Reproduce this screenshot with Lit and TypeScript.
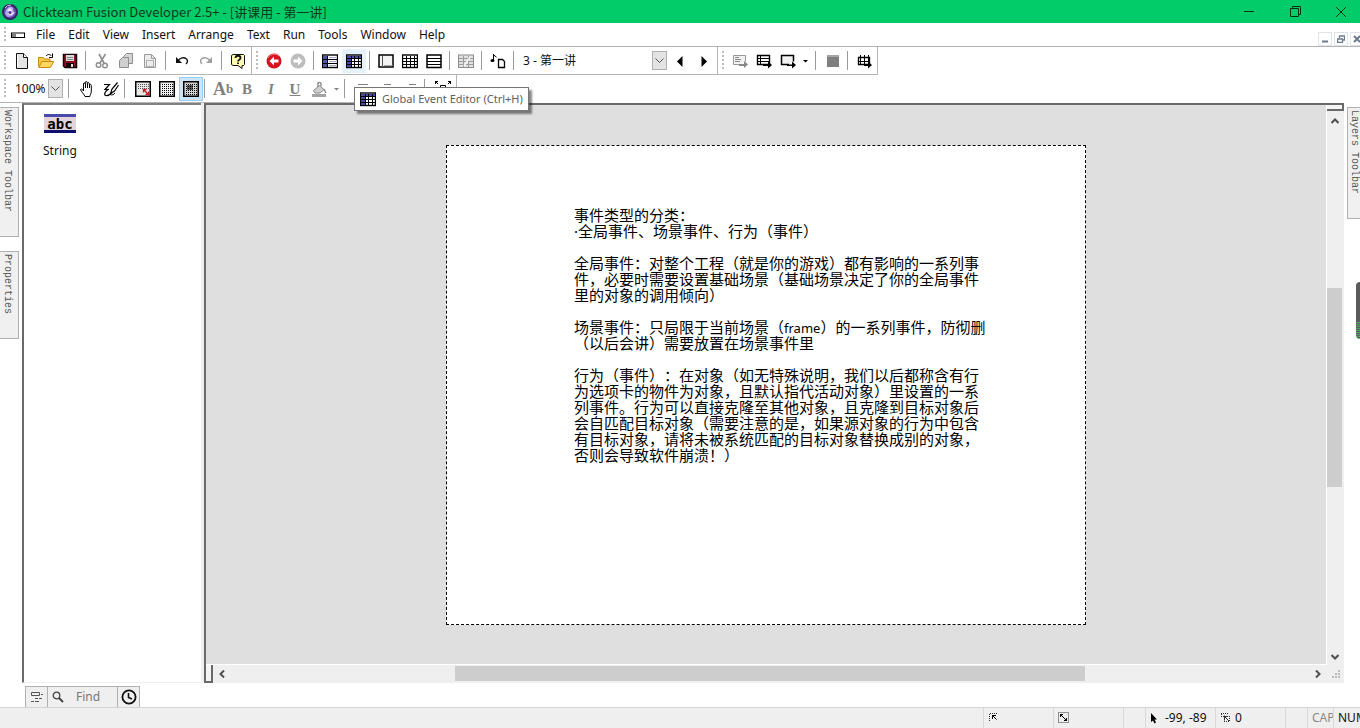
import { LitElement, html, svg, css, nothing, TemplateResult, SVGTemplateResult } from 'lit';
import { customElement, state } from 'lit/decorators.js';
import { classMap } from 'lit/directives/class-map.js';

const draw = (body: SVGTemplateResult, w = 16, h = 16) =>
  html`<svg class="icon" width=${w} height=${h} viewBox="0 0 ${w} ${h}" fill="none" aria-hidden="true">${body}</svg>`;

const gridDots = (cols: number[], rows: number[], color = '#000') =>
  rows.map((y) => cols.map((x) => svg`<rect x=${x} y=${y} width="1" height="1" fill=${color} />`));

const dots = [3, 5, 7, 9, 11, 13];

const icons: Record<string, TemplateResult> = {
  fresh: draw(svg`
    <path d="M2.500 .5h7l4 4v11h-11z" fill="#e4e4e4" stroke="#111"/><path d="M9.500 .5v4h4" fill="#fff" stroke="#111"/>
    <path d="M3.500 2v12" stroke="#fff"/>`),
  open: draw(svg`
    <path d="M.5 13.500V4.500h5l1 1.500h5.500v3" fill="#f7c948" stroke="#c68a10"/>
    <path d="M.8 14.500l3-6h12l-3.500 6z" fill="#ffd75e" stroke="#c68a10"/>
    <path d="M8 3c1.500-2 4-2 5.500 0M14.500 .5v4h-3.500" stroke="#000"/>`),
  save: draw(svg`
    <path d="M1.500 1.500h13v13H3l-1.500-1.500z" fill="#8c1020" stroke="#16060a" stroke-width="1.500"/>
    <rect x="4" y="2" width="8" height="6" fill="#d9d9d9"/><path d="M5 4.500h6M5 6.500h6" stroke="#8a8a8a"/>
    <rect x="4" y="10" width="8" height="4" fill="#16060a"/><rect x="9" y="11" width="2" height="3" fill="#e0e0e0"/>`),
  cut: draw(svg`
    <path d="M5 1l5 9M11.500 1L6 10" stroke="#8d8d8d" stroke-width="1.600"/>
    <circle cx="4.500" cy="12" r="2.300" stroke="#8d8d8d" stroke-width="1.400"/><circle cx="11" cy="12.500" r="2.300" stroke="#8d8d8d" stroke-width="1.400"/>`),
  copy: draw(svg`
    <path d="M5.500 3.500l3-3h6v10h-9z" fill="#d4d4d4" stroke="#8d8d8d"/>
    <path d="M1.500 7.500l3-3h6v10h-9z" fill="#cfcfcf" stroke="#8d8d8d"/>`),
  paste: draw(svg`
    <path d="M2.500 1.500h7l4 4v9h-11z" fill="#ececec" stroke="#9a9a9a"/><path d="M9.500 1.500v4h4" stroke="#9a9a9a"/>
    <rect x="4.500" y="7.500" width="7" height="6" stroke="#777" stroke-dasharray="1 1"/>`),
  undo: draw(svg`
    <path d="M2 4v6h6z" fill="#111"/><path d="M4 8c2-3.500 6-4 8-2.500s2 3.500 0 5.500" stroke="#111" stroke-width="1.400"/>`),
  redo: draw(svg`
    <path d="M14 4v6h-6z" fill="#a0a0a0"/><path d="M12 8C10 4.500 6 4 4 5.500s-2 3.500 0 5.500" stroke="#9a9a9a" stroke-width="1.400"/>`),
  help: draw(svg`
    <path d="M3 1.500h10.500l1 1v9l-1 1H12v3l-4-3H3l-1.500-1v-9z" fill="#ffffb4" stroke="#111"/>
    <path d="M5.500 5c.2-3 5-3 5 0 0 1.700-2.500 1.800-2.500 3.500M8 9.500v1.500" stroke="#111" stroke-width="1.800"/>`),
  back: draw(svg`
    <circle cx="8" cy="8" r="7.500" fill="#d8121c"/><path d="M2 5a7 7 0 0 1 11-2" stroke="#f4767b"/>
    <path d="M8 3.500L3.500 8 8 12.500V9.500h4.500v-3H8z" fill="#fff"/>`),
  forward: draw(svg`
    <circle cx="8" cy="8" r="7.500" fill="#bdbdbd"/><path d="M8 3.500L12.500 8 8 12.500V9.500H3.500v-3H8z" fill="#fff"/>`),
  storyboard: draw(svg`
    <rect x=".5" y="2" width="15" height="12.500" fill="#fff" stroke="#000" stroke-width="1.400"/><rect x="1" y="3" width="4" height="11" fill="#5555a8"/>
    <path d="M1 6.500h14M1 10.500h14M5.500 3v11" stroke="#000"/><path d="M7 4.500h7M7 8.500h7M7 12.500h7" stroke="#a9a9c9"/>`),
  global: draw(svg`
    <rect x=".5" y="2" width="15" height="12.500" fill="#fff" stroke="#000" stroke-width="1.400"/><path d="M1 3h14v3H5v8H1z" fill="#4a4aa5"/>
    <path d="M1 5.500h14M1 8.500h14M1 11.500h14M5.500 3v11M8.500 3v11M12.500 3v11" stroke="#000"/>`),
  frame: draw(svg`
    <rect x="1" y="2" width="14" height="12" fill="#f4f4f4" stroke="#000" stroke-width="1.500"/><path d="M4.500 3v11" stroke="#555"/><path d="M6 12.500h8.500" stroke="#aaa"/>`),
  events: draw(svg`
    <rect x=".5" y="2" width="15" height="12.500" fill="#fff" stroke="#000" stroke-width="1.400"/>
    <path d="M1 5.500h14M1 8.500h14M1 11.500h14M4.500 3v11M8.500 3v11M12.500 3v11" stroke="#000"/>`),
  list: draw(svg`
    <rect x="1" y="2" width="14" height="12.500" fill="#fff" stroke="#000" stroke-width="1.500"/><path d="M1 5.500h14M1 8.500h14M1 11.500h14" stroke="#000"/>`),
  data: draw(svg`
    <rect x=".5" y="2" width="15" height="12.500" fill="#e2e2e2" stroke="#8c8c8c"/>
    <path d="M1 5.500h14M1 8.500h14M1 11.500h14M5.500 3v11M10.500 3v11" stroke="#9c9c9c"/><path d="M12 4L6 13" stroke="#f7f7f7" stroke-width="1.500"/>`),
  music: draw(svg`
    <path d="M3.500 1v6M3.500 2l3 2" stroke="#000"/><ellipse cx="2.500" cy="7.500" rx="2" ry="1.500" fill="#000"/>
    <path d="M8.500 6.500h4l2 2v6h-6z" fill="#fff" stroke="#000" stroke-width="1.300"/>`),
  prev: draw(svg`<path d="M10.500 3v11L5 8.500z" fill="#000"/>`),
  next: draw(svg`<path d="M5.500 3v11L11 8.500z" fill="#000"/>`),
  runProject: draw(svg`
    <path d="M9 11.500H1.500v-9h12v6" fill="#f1f1f1" stroke="#999"/><path d="M3 4.500h4M3 6.500h6M3 8.500h5" stroke="#888"/>
    <path d="M7 11h5V8l4 3.500-4 3.500v-2H7z" fill="#888"/>`),
  runFrame: draw(svg`
    <path d="M1.500 2.500h12v9h-12z" fill="#fff" stroke="#000" stroke-width="1.400"/><path d="M1 5.500h13M1 8.500h13M4.500 2v10" stroke="#000"/>
    <path d="M7 11.500h5V8.500l4 3.500-4 3.500v-2.500H7z" fill="#000"/>`),
  run: draw(svg`
    <path d="M9 11.500H1.500v-9h12v6" fill="#f1f1f1" stroke="#000" stroke-width="1.500"/>
    <path d="M7 11.500h5V8.500l4 3.500-4 3.500v-2.500H7z" fill="#000"/>`),
  stop: draw(svg`<rect x="3" y="2" width="12" height="12" fill="#7f7f7f"/><path d="M3 3h12" stroke="#a5a5a5" stroke-width="2"/>`),
  build: draw(svg`
    <path d="M2.500 4.500h11v7h-11z" fill="#fff" stroke="#000" stroke-width="1.300"/><path d="M2 8.500h12M4.500 2v10M8.500 2v10M12.500 2v8" stroke="#000"/>
    <path d="M8 11.500h4V8.500l4 3.500-4 3.500v-2.500H8z" fill="#000"/>`),
  hand: draw(svg`
    <path d="M6 15.500C5 13 2 10.500 1.500 8.500c.5-1 2-.5 3 1.500V3c0-1.500 1.800-1.500 1.800 0V1.500c0-1.300 2-1.300 2 0V2.500c0-1.200 2-1.200 2 0v1.500c.3-1 2-1 2 .5V10c0 3-1.500 4-1.500 5.500zM6.500 3v4M8.500 2.500v4.500M10.500 4v3" fill="#fff" stroke="#000"/>`),
  pen: draw(svg`
    <path d="M1 3.500h5.500L2 8.500h4M5.500 8c-4 3-5 6-2.500 6.500s4-1 5.500-2.500" stroke="#000" stroke-width="1.200"/>
    <path d="M14.500 1.500L9 8l-1.500 4.500L11.500 10l4-6" fill="#fff" stroke="#000" stroke-width="1.200"/><path d="M7 13.500c2 1 4 0 5-1.500" stroke="#000"/>`),
  snap: draw(svg`
    <rect x=".75" y=".75" width="14.500" height="14.500" fill="#e8e8e8" stroke="#000" stroke-width="1.500"/>${gridDots([3, 5, 7, 9, 11, 13], [3, 5, 7], '#555')}
    <path d="M9 9l4 4M8.500 11.500V8.500h3M13.500 10.500v3H10.500" stroke="#c02020" stroke-width="1.300"/>`),
  grid: draw(svg`
    <rect x=".75" y=".75" width="14.500" height="14.500" fill="#f0f0f0" stroke="#000" stroke-width="1.500"/>${gridDots(dots, dots)}`),
  gridOn: draw(svg`
    <rect x=".75" y=".75" width="14.500" height="14.500" fill="#d2d2d2" stroke="#000" stroke-width="1.500"/>
    <rect x="4" y="4" width="6" height="5" fill="#555"/>${gridDots(dots, dots)}`),
  bucket: draw(svg`
    <path d="M1 14.500h14" stroke="#a4a4a4" stroke-width="3"/><path d="M2.500 9.500l6-5 4.500 4-4 3.500H4z" fill="#cfcfcf" stroke="#888"/><path d="M7 6V2.500c0-1.500 3-1.500 3 0V5M13 8l2 4" stroke="#888" stroke-width="1.400"/>`),
  alignL: draw(svg`<path d="M3 3.500h10M3 6.500h7M3 9.500h10M3 12.500h7" stroke="#808080"/>`),
  alignC: draw(svg`<path d="M5 3.500h7M3 6.500h10M5 9.500h7M3 12.500h10" stroke="#808080"/>`),
  alignR: draw(svg`<path d="M6 3.500h7M3 6.500h10M6 9.500h7M3 12.500h10" stroke="#808080"/>`),
  resize: draw(svg`<path d="M0 .5h3M.5 0v3M0 0l3 3M16 .5h-3M15.500 0v3M16 0l-3 3" stroke="#000"/><path d="M5.500 14V4.500H10.500V14M10 6.500h2V14" stroke="#000"/>`),
  caret: draw(svg`<path d="M1 7h5L3.500 9.500z" fill="currentColor"/>`, 8, 16),
  mdi: draw(svg`<rect x=".5" y="1" width="13" height="4.500" fill="#fff" stroke="#000"/><rect x="1" y="1.500" width="4" height="3.500" fill="#808080"/>`, 14, 6),
  tree: draw(svg`<path d="M1.500 2.500h8v3h-8zM11 4.500h2M5 8.500h3M9 8.500h3M1 11.500h3M5 11.500h4" stroke="#555"/>`, 14, 14),
  search: draw(svg`<circle cx="4.500" cy="4.500" r="3.300" stroke="#444" stroke-width="1.300"/><path d="M7 7l4 4" stroke="#444" stroke-width="2"/>`, 12, 12),
  clock: draw(svg`<circle cx="8" cy="8" r="6.600" stroke="#111" stroke-width="1.800"/><path d="M7.500 4v4.500l3.500 1.500" stroke="#111" stroke-width="1.600"/>`),
  cursor: draw(svg`<path d="M4 3v9l2-1.500 1.500 3 1.500-1-1.500-3H10z" fill="#000"/>`, 12, 16),
  corner: draw(svg`<path d="M2 1.500h8M1.500 2v8" stroke="#333" stroke-dasharray="1 1"/><path d="M4 3.500h4M4.500 3v4M4.500 3.500l4 4" stroke="#000"/>`, 11, 12),
  extent: draw(svg`<rect x=".5" y=".5" width="10" height="10" stroke="#333" stroke-dasharray="1 1"/><path d="M2 2.500h3M2.500 2v3M2.500 2.500l6 6M9 8.500H6M8.500 9V6" stroke="#000"/>`, 11, 12),
  count: draw(svg`<path d="M1 1.500h8M1.500 2v4M9.500 4v6M4 9.500h6" stroke="#333" stroke-dasharray="1 1"/><path d="M3 4.500h5M4.500 3.500v5M4 4l5 5" stroke="#333"/>`, 12, 12),
};

const chevron = (d: string) =>
  html`<svg width="8" height="8" viewBox="0 0 8 8" fill="none" aria-hidden="true"><path d=${d} stroke="#4f4f4f" stroke-width="2"/></svg>`;

type Item = { icon?: string; glyph?: string | TemplateResult; cls?: string; label?: string; sep?: boolean; caret?: boolean; off?: boolean; tip?: string };
const sep: Item = { sep: true };

const standardBar: Item[] = [
  { icon: 'fresh', label: 'New' }, { icon: 'open', label: 'Open' }, { icon: 'save', label: 'Save' }, sep,
  { icon: 'cut', label: 'Cut' }, { icon: 'copy', label: 'Copy' }, { icon: 'paste', label: 'Paste' }, sep,
  { icon: 'undo', label: 'Undo' }, { icon: 'redo', label: 'Redo' }, sep,
  { icon: 'help', label: 'Help' },
];
const editorBar: Item[] = [
  { icon: 'back', label: 'Back' }, { icon: 'forward', label: 'Forward' }, sep,
  { icon: 'storyboard', label: 'Storyboard Editor' },
  { icon: 'global', label: 'Global Event Editor', cls: 'hot', tip: 'Global Event Editor (Ctrl+H)' }, sep,
  { icon: 'frame', label: 'Frame Editor' }, { icon: 'events', label: 'Event Editor' }, { icon: 'list', label: 'Event List Editor' }, sep,
  { icon: 'data', label: 'Data Elements' }, sep,
  { icon: 'music', label: 'Frame Sounds' }, sep,
];
const runBar: Item[] = [
  { icon: 'runProject', label: 'Run Project' }, { icon: 'runFrame', label: 'Run Frame' }, { icon: 'run', label: 'Run' },
  { caret: true, label: 'Run options' }, sep,
  { icon: 'stop', label: 'Stop' }, sep, { icon: 'build', label: 'Build' },
];
const frameBar: Item[] = [
  sep, { icon: 'hand', label: 'Hand tool' }, { icon: 'pen', label: 'Pen tool' }, sep,
  { icon: 'snap', label: 'Grid setup' }, { icon: 'grid', label: 'Show grid' }, { icon: 'gridOn', label: 'Snap to grid', cls: 'on' }, sep,
  { glyph: html`A<sup>b</sup>`, cls: 'font', label: 'Font' }, { glyph: 'B', label: 'Bold' }, { glyph: 'I', cls: 'italic', label: 'Italic' },
  { glyph: 'U', cls: 'under', label: 'Underline' }, { icon: 'bucket', label: 'Text color' }, { caret: true, off: true, label: 'Color options' }, sep,
  { icon: 'alignL', label: 'Align left' }, { icon: 'alignC', label: 'Align center' }, { icon: 'alignR', label: 'Align right' }, sep,
  { icon: 'resize', label: 'Fit to text' },
];

const menus = ['File', 'Edit', 'View', 'Insert', 'Arrange', 'Text', 'Run', 'Tools', 'Window', 'Help'];

const note: (string | TemplateResult)[] = [
  '事件类型的分类：',
  '·全局事件、场景事件、行为（事件）',
  '',
  '全局事件：对整个工程（就是你的游戏）都有影响的一系列事',
  '件，必要时需要设置基础场景（基础场景决定了你的全局事件',
  '里的对象的调用倾向）',
  '',
  html`场景事件：只局限于当前场景（<span class="latin">frame</span>）的一系列事件，防彻删`,
  '（以后会讲）需要放置在场景事件里',
  '',
  '行为（事件）：在对象（如无特殊说明，我们以后都称含有行',
  '为选项卡的物件为对象，且默认指代活动对象）里设置的一系',
  '列事件。行为可以直接克隆至其他对象，且克隆到目标对象后',
  '会自匹配目标对象（需要注意的是，如果源对象的行为中包含',
  '有目标对象，请将未被系统匹配的目标对象替换成别的对象，',
  '否则会导致软件崩溃！）',
];

@customElement('app-root')
export class AppRoot extends LitElement {
  @state() private frameName = '3 - 第一讲';

  static styles = css`
    :host { display: flex; flex-direction: column; height: 100vh; overflow: hidden; background: #fff; color: #111;
      font: 12px/16px "Noto Sans", "Noto Sans CJK SC", sans-serif; }
    * { box-sizing: border-box; }
    button, select { font: inherit; color: inherit; margin: 0; padding: 0; border: 0; background: none; border-radius: 0; }
    button { display: flex; align-items: center; justify-content: center; flex: none; }
    svg { display: block; flex: none; }

    .title { display: flex; align-items: center; height: 23px; flex: none; background: #02cc69; padding-left: 2px; gap: 5px; overflow: hidden; color: #0c3a1e; }
    .title h1 { font: 13px/16px "Noto Sans CJK SC", sans-serif; margin: 0; flex: 1; white-space: nowrap; }
    .winbtns { display: flex; margin-right: -4px; }
    .winbtns button { width: 46px; height: 22px; }

    .menubar { display: flex; align-items: center; height: 24px; flex: none; border-bottom: 1px solid #b4b4b4; overflow: hidden; }
    .menubar nav { display: flex; flex: 1; }
    .menubar nav button { padding: 0 6px 0 7px; height: 22px; }
    .menubar .grip { align-self: stretch; }
    .doc { padding: 0 4px 0 1px; }
    .mdibtns { display: flex; gap: 2px; margin-right: -4px; align-self: flex-end; }
    .mdibtns button { width: 14px; height: 14px; border: 1px solid #dfe4ea; }

    .grip { flex: none; width: 2px; margin: 4px; background: repeating-linear-gradient(#bdbdbd 0 2px, transparent 2px 4px); }
    .bars { display: flex; flex: none; }
    .band { display: flex; align-items: stretch; height: 28px; border-right: 1px solid #b4b4b4; border-bottom: 1px solid #b4b4b4; padding-right: 1px; }
    .tool { width: 24px; height: 24px; align-self: center; position: relative; border: 1px solid transparent; }
    .tool.hot { background: #e5f1fb; }
    .tool.on { background: #cce4f7; border-color: #99cdf5; }
    .tool.glyph { font: bold 15px/20px "Liberation Serif", serif; color: #808080; }
    .tool.font { font-size: 18px; }
    .tool sup { font-size: 13px; line-height: 8px; }
    .tool.italic { font-style: italic; }
    .tool.under { text-decoration: underline; }
    .caret { width: 12px; color: #000; }
    .caret.off { color: #808080; }
    .sep { flex: none; width: 1px; margin: 4px 4px 4px 3px; background: #9a9a9a; }
    .frameband .sep { margin: 4px 6px 4px 1px; }

    .combo { display: flex; position: relative; align-items: center; }
    .combo select { appearance: none; height: 20px; outline: none; }
    .combo.wide select { width: 150px; padding-left: 5px; }
    .combo.zoomer { margin-right: 3px; }
    .combo.zoomer select { width: 54px; padding-left: 5px; }
    .drop { position: absolute; right: 1px; width: 15px; height: 19px; display: grid; place-items: center; background: #e3e3e3; border: 1px solid #b0b0b0; pointer-events: none; }

    .tooltip { position: absolute; z-index: 5; left: 11px; top: 37px; display: flex; align-items: center; gap: 6px; height: 24px; padding: 0 5px; white-space: nowrap;
      background: #fff; border: 1px solid #767676; color: #606060; font-size: 11px; box-shadow: 3px 3px 2px #0007; }

    .main { display: flex; flex: 1; min-height: 0; }
    .dock { width: 22px; flex: none; display: flex; flex-direction: column; align-items: flex-start; gap: 14px; padding-top: 4px; position: relative; }
    .dock.right { width: 16px; align-items: flex-end; overflow: hidden; }
    .sidetab { writing-mode: vertical-rl; width: 19px; border: 1px solid #b0b0b0; border-left: 0; background: #f0f0f0; color: #555;
      font: 10px/12px "Liberation Mono", monospace; justify-content: flex-start; padding: 2px 5px 24px 1px; }
    .dock.right .sidetab { border-left: 1px solid #b0b0b0; border-right: 0; width: 13px; padding: 2px 0 24px; }
    .gadget { position: absolute; right: 0; top: 179px; width: 4px; height: 57px; border-radius: 4px 0 0 4px;
      background: repeating-linear-gradient(#4fa868 0 1px, #5b5b5b 1px 2px) bottom / 100% 17px no-repeat #5b5b5b; }

    .objects { width: 179px; flex: none; border: solid #696969; border-width: 2px 0 0 2px; border-top-color: #808080; border-bottom: 1px solid #efefef; }
    .object { margin: 9px 0 0 19px; display: flex; flex-direction: column; align-items: flex-start; gap: 10px; }
    .abc { width: 32px; height: 19px; background: #e3d3da; border: solid #4a4aac; border-width: 3px 0; border-bottom-color: #101070; display: grid; place-items: center;
      font: bold 14px/12px "DejaVu Sans Mono", monospace; color: #000; margin-left: 1px; }
    .split { width: 3px; flex: none; background: #efefef; }

    .editor { flex: 1; min-width: 0; display: grid; grid-template: 1fr 18px / 1fr 17px; border: solid #696969; border-width: 2px 0 0 2px; background: #efefef; }
    .canvas { display: grid; place-items: center; background: #dfdfdf; min-height: 0; overflow: hidden; border: solid #fff; border-width: 0 1px 1px 0; }
    .sheet { width: 640px; height: 480px; background: #fff; border: 1px dashed #000; padding: 61px 0 0 127px; }
    .note { margin: 0; font: 15px/16px "Noto Sans", "Noto Sans CJK SC", sans-serif; white-space: nowrap; color: #000; text-spacing-trim: space-all; }
    .note div { height: 16px; }
    .latin { font-size: 13px; }

    .vbar { display: flex; flex-direction: column; }
    .vbar .knob { height: 6px; background: #f4f4f4; border: 1px solid #696969; border-width: 0 2px 2px 0; }
    .vbar button { height: 20px; padding-right: 2px; }
    .vbar button:last-child { height: 16px; }
    .vtrack { flex: 1; display: grid; grid-template-rows: 30fr 38fr 31fr; }
    .vtrack i { grid-row: 2; background: #cdcdcd; margin-right: 2px; }
    .hbar { display: flex; }
    .hbar .knob { width: 7px; background: #f4f4f4; border: 1px solid #696969; border-width: 0 2px 2px 0; }
    .hbar button { width: 18px; }
    .htrack { flex: 1; display: grid; grid-template-columns: 224fr 629fr 224fr; }
    .htrack i { grid-column: 2; background: #cdcdcd; margin: 1px 0 2px; }
    .size { display: grid; place-items: center; }

    .finder { display: flex; flex: none; height: 24px; padding: 3px 0 0 25px; }
    .finder button { border: 1px solid #b0b0b0; border-width: 1px 0 0 1px; background: #efefef; width: 22px; color: #777; }
    .finder button.find { width: 70px; justify-content: flex-start; padding-left: 4px; gap: 12px; }
    .finder button:last-child { width: 23px; border-right-width: 1px; }

    .status { display: flex; justify-content: flex-end; flex: none; height: 21px; background: #efefef; border-top: 1px solid #d4d4d4; overflow: hidden; }
    .cell { width: 70px; flex: none; border-left: 1px solid #d9d9d9; display: flex; align-items: center; padding-left: 4px; gap: 3px; overflow: hidden; white-space: nowrap; }
    .cell.slim { width: 22px; }
    .cell.key { width: 26px; padding-left: 4px; }
    .cell.key:last-child { width: 27px; }
    .cell.dim { color: #8a8a8a; }
    .cell.pos { padding-left: 1px; gap: 6px; }
  `;

  private tool(i: Item) {
    if (i.sep) return html`<span class="sep"></span>`;
    if (i.caret) return html`<button class=${classMap({ caret: true, off: !!i.off })} aria-label=${i.label ?? ''}>${icons.caret}</button>`;
    return html`<button class="tool ${i.cls ?? ''} ${i.glyph ? 'glyph' : ''}" aria-label=${i.label ?? ''}>
      ${i.glyph ?? icons[i.icon!]}
      ${i.tip ? html`<span class="tooltip" role="tooltip">${icons.global}<span>${i.tip}</span></span>` : nothing}
    </button>`;
  }

  private dropMark() {
    return html`<span class="drop"><svg width="9" height="6" viewBox="0 0 9 6" fill="none"><path d="M.5 .5l4 4 4-4" stroke="#555"/></svg></span>`;
  }

  render() {
    return html`
      <header class="title">
        <svg width="16" height="16" viewBox="0 0 16 16" aria-hidden="true">
          <circle cx="8" cy="8" r="8" fill="#34206b"/><circle cx="8" cy="8" r="6" fill="#6a52b4"/>
          <path d="M7 3c3-1 5 1 4 3l2 3-3 3-4 1-3-3 1-4z" fill="#b7a8e6"/><path d="M8 4l2 2-1 2 3 1-3 2-3-1 1-3-2-1z" fill="#f3effd"/><circle cx="8" cy="8.500" r="1.500" fill="#4a2f91"/>
          <path d="M3 4a6.500 6.500 0 0 1 6-3" stroke="#c9c0f0" fill="none"/>
        </svg>
        <h1>Clickteam Fusion Developer 2.5+ - [讲课用 - 第一讲]</h1>
        <div class="winbtns">
          <button aria-label="Minimize"><svg width="10" height="10" viewBox="0 0 10 10"><path d="M0 4.500h10" stroke="#031"/></svg></button>
          <button aria-label="Restore"><svg width="11" height="11" viewBox="0 0 11 11" fill="none"><path d="M.5 2.500h8v8h-8zM2.500 2.500v-2h8v8h-2" stroke="#031"/></svg></button>
          <button aria-label="Close"><svg width="10" height="10" viewBox="0 0 10 10"><path d="M0 0l10 10M10 0L0 10" stroke="#031"/></svg></button>
        </div>
      </header>

      <div class="menubar">
        <span class="grip"></span>
        <span class="doc">${icons.mdi}</span>
        <nav>${menus.map((m) => html`<button>${m}</button>`)}</nav>
        <div class="mdibtns">
          <button aria-label="Minimize document"><svg width="8" height="8" viewBox="0 0 8 8"><path d="M1 6.500h6" stroke="#6d7a8c" stroke-width="2"/></svg></button>
          <button aria-label="Restore document"><svg width="8" height="8" viewBox="0 0 8 8" fill="none"><path d="M.5 4h5v3.500h-5zM2.500 3V1h5v4H6" stroke="#6d7a8c" stroke-width="1.300"/></svg></button>
          <button aria-label="Close document"><svg width="8" height="8" viewBox="0 0 8 8"><path d="M1 1l6 6M7 1L1 7" stroke="#6d7a8c" stroke-width="2"/></svg></button>
        </div>
      </div>

      <div class="bars">
        <div class="band" role="toolbar" aria-label="Standard"><span class="grip"></span>${standardBar.map((i) => this.tool(i))}</div>
        <div class="band" role="toolbar" aria-label="Editors"><span class="grip"></span>${editorBar.map((i) => this.tool(i))}
          <div class="combo wide">
            <select aria-label="Frame" @change=${(e: Event) => (this.frameName = (e.target as HTMLSelectElement).value)}><option>${this.frameName}</option></select>
            ${this.dropMark()}
          </div>
          <button class="tool" aria-label="Previous frame">${icons.prev}</button>
          <button class="tool" aria-label="Next frame">${icons.next}</button>
        </div>
        <div class="band" role="toolbar" aria-label="Run"><span class="grip"></span>${runBar.map((i) => this.tool(i))}</div>
      </div>
      <div class="bars">
        <div class="band frameband" role="toolbar" aria-label="Frame editor"><span class="grip"></span>
          <div class="combo zoomer"><select aria-label="Zoom"><option>100%</option></select>${this.dropMark()}</div>
          ${frameBar.map((i) => this.tool(i))}
        </div>
      </div>

      <div class="main">
        <aside class="dock">
          <button class="sidetab">Workspace Toolbar</button>
          <button class="sidetab">Properties</button>
        </aside>
        <section class="objects">
          <div class="object"><span class="abc">abc</span><span>String</span></div>
        </section>
        <div class="split"></div>
        <section class="editor">
          <div class="canvas">
            <article class="sheet"><div class="note">${note.map((l) => html`<div>${l}</div>`)}</div></article>
          </div>
          <div class="vbar">
            <span class="knob"></span>
            <button aria-label="Scroll up">${chevron('M.5 6L4 2.500 7.500 6')}</button>
            <div class="vtrack"><i></i></div>
            <button aria-label="Scroll down">${chevron('M.5 2L4 5.500 7.500 2')}</button>
          </div>
          <div class="hbar">
            <span class="knob"></span>
            <button aria-label="Scroll left">${chevron('M6 .5L2.500 4 6 7.500')}</button>
            <div class="htrack"><i></i></div>
            <button aria-label="Scroll right">${chevron('M2 .5L5.500 4 2 7.500')}</button>
          </div>
          <span class="size"><svg width="8" height="8" viewBox="0 0 8 8"><path d="M6 0h2v2H6zM3 3h2v2H3zM6 3h2v2H6zM0 6h2v2H0zM3 6h2v2H3zM6 6h2v2H6z" fill="#bcbcbc"/></svg></span>
        </section>
        <aside class="dock right">
          <button class="sidetab">Layers Toolbar</button>
          <span class="gadget"></span>
        </aside>
      </div>

      <div class="finder">
        <button aria-label="Hierarchy">${icons.tree}</button>
        <button class="find">${icons.search}<span>Find</span></button>
        <button aria-label="History">${icons.clock}</button>
      </div>

      <footer class="status">
        <span class="cell">${icons.corner}</span>
        <span class="cell">${icons.extent}</span>
        <span class="cell slim"></span>
        <span class="cell pos">${icons.cursor}<span>-99, -89</span></span>
        <span class="cell">${icons.count}<span>0</span></span>
        <span class="cell slim"></span>
        <span class="cell key dim">CAP</span>
        <span class="cell key">NUM</span>
      </footer>
    `;
  }
}
